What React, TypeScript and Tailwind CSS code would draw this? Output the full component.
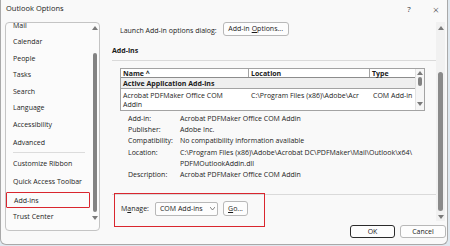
import React from "react";

const font = { fontFamily: '"Open Sans", "Noto Sans", sans-serif' };

const navTop = [
  { label: "Mail", h: "h-[16.5px]" },
  { label: "Calendar", h: "h-[16.5px]" },
  { label: "People", h: "h-[16.5px]" },
  { label: "Tasks", h: "h-[16.5px]" },
  { label: "Search", h: "h-[16.5px]" },
  { label: "Language", h: "h-[16.5px]" },
  { label: "Accessibility", h: "h-[17px]" },
  { label: "Advanced", h: "h-[18px]" },
];

const details = [
  ["Add-in:", "Acrobat PDFMaker Office COM Addin"],
  ["Publisher:", "Adobe Inc."],
  ["Compatibility:", "No compatibility information available"],
  ["Location:", "C:\\Program Files (x86)\\Adobe\\Acrobat DC\\PDFMaker\\Mail\\Outlook\\x64\\"],
  ["", "PDFMOutlookAddin.dll"],
  ["Description:", "Acrobat PDFMaker Office COM Addin"],
];

const Up = ({ c = "#7a7a7a" }: { c?: string }) => (
  <svg width="6" height="4" viewBox="0 0 6 4">
    <path d="M0 4 L3 0 L6 4 Z" fill={c} />
  </svg>
);
const Down = ({ c = "#7a7a7a" }: { c?: string }) => (
  <svg width="6" height="4" viewBox="0 0 6 4">
    <path d="M0 0 L3 4 L6 0 Z" fill={c} />
  </svg>
);

const App = () => {
  return (
    <div className="w-[450px] h-[246px] bg-[#dfe8ef] overflow-hidden text-[#1b1b1b] text-[7px] leading-none" style={font}>
      <div className="w-[448px] h-[245px] bg-[#f9f9f9] border border-t-0 border-[#a9a9a9] rounded-b-[6px] flex flex-col">
        {/* title bar */}
        <div className="h-[22px] flex items-center pl-[5px] pb-[4px]">
          <span className="text-[7.5px] text-[#222]">Outlook Options</span>
          <span className="ml-auto text-[8px] text-[#333]">?</span>
          <span className="ml-[22px] mr-[8px] text-[11px] font-light text-[#333]">×</span>
        </div>

        <div className="flex flex-1">
          {/* nav */}
          <div className="ml-[4px] w-[95px] h-[209px] border border-[#c4c4c4] rounded-[4px] bg-[#fbfbfb] flex overflow-hidden">
            <div className="flex-1 -mt-[6px] pl-[7px] pr-[1px]">
              {navTop.map((n) => (
                <div key={n.label} className={`${n.h} flex items-center`}>{n.label}</div>
              ))}
              <div className="h-px bg-[#dcdcdc] mt-[1px] mr-[5px]" />
              <div className="h-[18px] mt-[1.5px] flex items-center">Customize Ribbon</div>
              <div className="h-[18.5px] flex items-center">Quick Access Toolbar</div>
              <div className="h-[16px] mt-[1px] -ml-[7px] pl-[7px] flex items-center border-[1.5px] border-[#d9262e] rounded-[1px]">Add-ins</div>
              <div className="h-[17px] flex items-center">Trust Center</div>
            </div>
            <div className="w-[8px] flex flex-col items-center pt-[3px] pb-[10px]">
              <Up />
              <div className="w-[4px] mt-[23px] flex-1 rounded-full bg-[#838383]" />
              <div className="mt-[4px]"><Down /></div>
            </div>
          </div>

          {/* main */}
          <div className="flex-1 flex flex-col">
            <div className="h-[199px] flex relative">
              <div className="flex-1">
                <div className="h-[13px] flex items-center pl-[20px]">
                  <span className="mt-[3px]">Launch Add-in options dialog:</span>
                  <div className="ml-[6px] w-[66px] h-[14px] border border-[#b8b8b8] rounded-[3px] bg-[#fdfdfd] flex items-center justify-center">
                    Add-in <span className="underline ml-[2px]">O</span>ptions...
                  </div>
                </div>
                <div className="mt-[10px] h-[10px] pl-[12px] flex items-center font-bold">Add-ins</div>
                <div className="mt-[5px] ml-[12px] h-px bg-[#dadada]" />

                {/* table */}
                <div className="mt-[7px] ml-[20px] w-[305px] h-[43px] border border-[#a3a3a3] bg-white flex">
                  <div className="flex-1 flex flex-col">
                    <div className="h-[9px] flex border-b border-[#8c8c8c] font-bold">
                      <div className="w-[128px] border-r border-[#a3a3a3] pl-[2px] flex items-center">Name ^</div>
                      <div className="w-[121px] border-r border-[#a3a3a3] pl-[2px] flex items-center">Location</div>
                      <div className="flex-1 pl-[2px] flex items-center">Type</div>
                    </div>
                    <div className="h-[11px] bg-[#efefef] border-b border-[#a3a3a3] pl-[2px] flex items-center font-bold">Active Application Add-ins</div>
                    <div className="flex-1 flex pt-[3px]">
                      <div className="w-[128px] pl-[2px] leading-[8.5px]">Acrobat PDFMaker Office COM<br />Addin</div>
                      <div className="w-[121px] pl-[2px] leading-[8.5px] whitespace-nowrap overflow-hidden">C:\Program Files (x86)\Adobe\Acr</div>
                      <div className="flex-1 pl-[3px] leading-[8.5px] whitespace-nowrap">COM Add-in</div>
                    </div>
                  </div>
                  <div className="w-[9px] border-l border-[#e3e3e3] bg-[#f6f6f6] flex flex-col items-center pt-[2px] pb-[4px]">
                    <Up />
                    <div className="w-[4px] h-[9px] mt-[2px] rounded-full bg-[#838383]" />
                    <div className="mt-auto"><Down /></div>
                  </div>
                </div>

                {/* details */}
                <div className="mt-[2px] pl-[28px]">
                  {details.map(([k, v], i) => (
                    <div key={i} className="h-[11.2px] flex items-center whitespace-nowrap">
                      <span className="w-[52px]">{k}</span>
                      <span>{v}</span>
                    </div>
                  ))}
                </div>

                <div className="mt-[14px] ml-[12px] h-px bg-[#dadada] relative">
                  <div className="absolute left-[2px] -top-[1px] w-[151px] h-[34px] border-[1.5px] border-[#d9262e]" />
                </div>
                <div className="mt-[6px] pl-[21px] flex items-center h-[15px]">
                  <span>M<span className="underline">a</span>nage:</span>
                  <div className="ml-[6px] w-[63px] h-[14px] border border-[#b8b8b8] rounded-[2px] bg-[#fdfdfd] flex items-center pl-[4px] pr-[2px]">
                    <span>COM Add-ins</span>
                    <span className="ml-auto"><svg width="5" height="3" viewBox="0 0 5 3"><path d="M0 0 L2.5 3 L5 0" fill="none" stroke="#666" strokeWidth="0.8" /></svg></span>
                  </div>
                  <div className="ml-[5px] w-[25px] h-[15px] border border-[#b8b8b8] rounded-[3px] bg-[#fdfdfd] flex items-center justify-center">
                    <span className="underline">G</span>o...
                  </div>
                </div>
              </div>
              {/* main scrollbar */}
              <div className="w-[9px] mr-[2px] bg-[#f1f1f1] flex flex-col items-center pt-[4px] pb-[2px]">
                <Up />
                <div className="w-[5px] mt-[42px] flex-1 rounded-full bg-[#8a8a8a]" />
                <div className="mt-[4px]"><Down /></div>
              </div>
            </div>

            <div className="flex justify-end gap-[5px] pr-[1px] mt-[4px]">
              <div className="w-[45px] h-[13px] border-[1.5px] border-[#2b2b2b] rounded-[3px] bg-[#fdfdfd] flex items-center justify-center">OK</div>
              <div className="w-[46px] h-[13px] border border-[#b8b8b8] rounded-[3px] bg-[#fdfdfd] flex items-center justify-center">Cancel</div>
            </div>
          </div>
        </div>
      </div>
    </div>
  );
};

export default App;
